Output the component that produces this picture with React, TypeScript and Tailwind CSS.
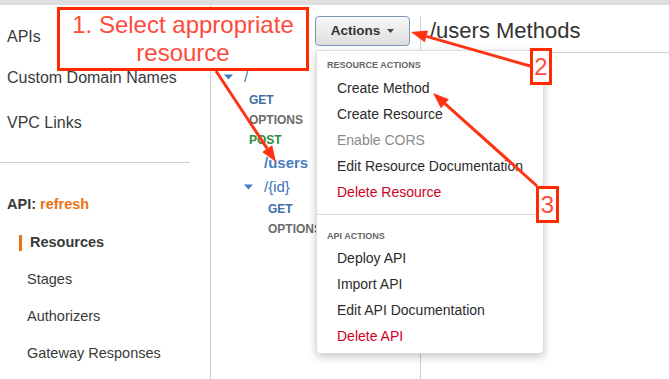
import React from "react";

const SIDE_TOP = [
  { label: "APIs", h: "h-[40px]" },
  { label: "Custom Domain Names", h: "h-[42px]" },
  { label: "VPC Links", h: "h-[48px]" },
];

const SIDE_API = ["Stages", "Authorizers", "Gateway Responses"];

const RESOURCE_ACTIONS = [
  { label: "Create Method", tone: "text-[#2b2b2b]" },
  { label: "Create Resource", tone: "text-[#2b2b2b]" },
  { label: "Enable CORS", tone: "text-[#8a8a8a]" },
  { label: "Edit Resource Documentation", tone: "text-[#2b2b2b]" },
  { label: "Delete Resource", tone: "text-[#d0021b]" },
];

const API_ACTIONS = [
  { label: "Deploy API", tone: "text-[#2b2b2b]" },
  { label: "Import API", tone: "text-[#2b2b2b]" },
  { label: "Edit API Documentation", tone: "text-[#2b2b2b]" },
  { label: "Delete API", tone: "text-[#d0021b]" },
];

function Caret() {
  return (
    <svg width="9" height="6" viewBox="0 0 9 6" className="shrink-0">
      <path d="M0 0.5 L9 0.5 L4.5 5.5 Z" fill="#3f7ec6" />
    </svg>
  );
}

function Sidebar() {
  return (
    <div className="w-[211px] shrink-0 border-r border-[#cfcfcf] pt-[12px] text-[#3a3a3a]">
      {SIDE_TOP.map((item) => (
        <div key={item.label} className={`flex items-center pl-[7px] text-[16px] ${item.h}`}>
          {item.label}
        </div>
      ))}
      <div className="mt-[15px] mr-[20px] border-t border-[#cfcfcf]" />
      <div className="mt-[27px] flex h-[30px] items-center pl-[7px] text-[14.5px] font-bold">
        API:&nbsp;<span className="text-[#ec7211]">refresh</span>
      </div>
      <div className="mt-[4px]">
        <div className="flex h-[37px] items-center pl-[19px] text-[14.5px] font-bold">
          <span className="mr-[8px] h-[16px] w-[3px] bg-[#ec7211]" />
          Resources
        </div>
        {SIDE_API.map((label) => (
          <div key={label} className="flex h-[37px] items-center pl-[27px] text-[14.5px]">
            {label}
          </div>
        ))}
      </div>
    </div>
  );
}

function ResourceTree() {
  return (
    <div className="w-[209px] shrink-0">
      <div className="flex justify-end pt-[11px] pr-[10px]">
        <button className="flex h-[30px] w-[95px] items-center justify-center gap-[7px] rounded-[4px] border border-[#7d98b9] bg-gradient-to-b from-[#f8f8f8] to-[#dedede] text-[13.5px] font-bold text-[#333]">
          Actions
          <svg width="7" height="4" viewBox="0 0 7 4">
            <path d="M0 0 L7 0 L3.5 4 Z" fill="#444" />
          </svg>
        </button>
      </div>
      <div className="mt-[21px] text-[12px] font-bold">
        <div className="flex h-[20px] items-center pl-[13px]">
          <Caret />
          <span className="ml-[11px] text-[15px] font-normal text-[#3f73b3]">/</span>
        </div>
        <div className="mt-[3px] flex h-[20px] items-center pl-[38px] text-[#3f6ea6]">GET</div>
        <div className="flex h-[20px] items-center pl-[38px] text-[#6b6b6b]">OPTIONS</div>
        <div className="flex h-[20px] items-center pl-[38px] text-[#2e8a40]">POST</div>
        <div className="mt-[2px] flex h-[22px] items-center pl-[53px] text-[15px] text-[#4a7dbb]">/users</div>
        <div className="mt-[2px] flex h-[22px] items-center pl-[33px]">
          <Caret />
          <span className="ml-[11px] text-[15px] font-normal text-[#3f73b3]">/{"{id}"}</span>
        </div>
        <div className="mt-[1px] flex h-[20px] items-center pl-[57px] text-[#3f6ea6]">GET</div>
        <div className="flex h-[20px] items-center pl-[57px] text-[#6b6b6b]">OPTIONS</div>
      </div>
    </div>
  );
}

function MainPanel() {
  return (
    <div className="mt-[11px] flex-1 border-l border-[#cfcfcf]">
      <div className="h-[37px] border-b border-[#cfcfcf] pl-[9px] text-[22px] leading-[30px] text-[#333]">
        /users Methods
      </div>
    </div>
  );
}

function ActionsMenu() {
  return (
    <div className="absolute left-[316px] top-[50px] w-[228px] rounded-b-[4px] border border-[#dcdcdc] bg-white pt-[6px] pb-[4px] shadow-[0_3px_8px_rgba(0,0,0,0.22)]">
      <div className="flex h-[18px] items-center pl-[10px] text-[9px] font-bold text-[#666]">
        RESOURCE ACTIONS
      </div>
      {RESOURCE_ACTIONS.map((a) => (
        <div key={a.label} className={`flex h-[26px] items-center pl-[20px] text-[14px] ${a.tone}`}>
          {a.label}
        </div>
      ))}
      <div className="mt-[9px] border-t border-[#dcdcdc]" />
      <div className="mt-[13px] flex h-[17px] items-center pl-[10px] text-[9px] font-bold text-[#666]">
        API ACTIONS
      </div>
      {API_ACTIONS.map((a) => (
        <div key={a.label} className={`flex h-[26px] items-center pl-[20px] text-[14px] ${a.tone}`}>
          {a.label}
        </div>
      ))}
    </div>
  );
}

function Annotations() {
  const red = "#ff3214";
  return (
    <>
      <svg className="pointer-events-none absolute left-0 top-0" width="669" height="379">
        <line x1="216" y1="71" x2="267.2" y2="148.6" stroke={red} strokeWidth="3" />
        <polygon points="276,162 262.2,151.9 272.2,145.3" fill={red} />
        <line x1="530" y1="66" x2="426.4" y2="36.4" stroke={red} strokeWidth="3" />
        <polygon points="411,32 428.1,30.6 424.7,42.2" fill={red} />
        <line x1="537" y1="186" x2="444.9" y2="103.7" stroke={red} strokeWidth="3" />
        <polygon points="433,93 448.9,99.2 440.9,108.2" fill={red} />
      </svg>
      <div className="absolute left-[57px] top-[7px] flex h-[64px] w-[252px] flex-col items-center justify-center border-[3px] border-[#ff2a00] bg-white text-[24px] leading-[28px] text-[#ff4a3c]">
        <span>1. Select appropriate</span>
        <span>resource</span>
      </div>
      <div className="absolute left-[530px] top-[48px] flex h-[37px] w-[22px] items-center justify-center border-[3px] border-[#ff2a00] bg-white text-[24px] text-[#ff4a3c]">
        2
      </div>
      <div className="absolute left-[536px] top-[186px] flex h-[37px] w-[23px] items-center justify-center border-[3px] border-[#ff2a00] bg-white text-[24px] text-[#ff4a3c]">
        3
      </div>
    </>
  );
}

export default function App() {
  return (
    <div className="relative h-[379px] w-[669px] overflow-hidden bg-white font-['Liberation_Sans',Arial,sans-serif]">
      <div className="h-[5px] bg-[#dedede]" />
      <div className="flex h-[374px]">
        <Sidebar />
        <ResourceTree />
        <MainPanel />
      </div>
      <ActionsMenu />
      <Annotations />
    </div>
  );
}
